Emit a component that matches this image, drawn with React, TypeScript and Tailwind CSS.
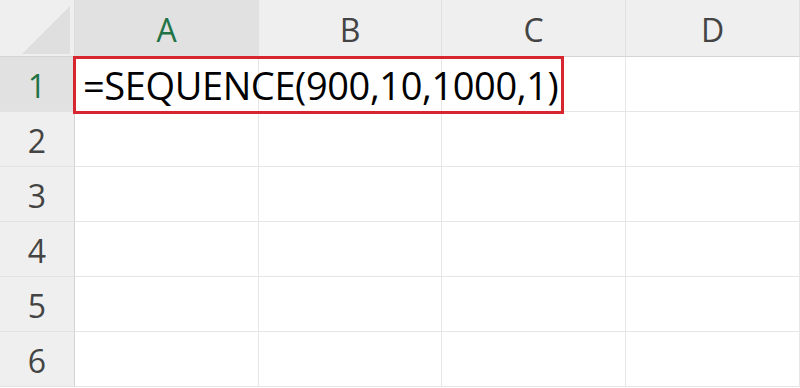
import React from 'react';

const cols = ['A', 'B', 'C', 'D'];
const rows = [1, 2, 3, 4, 5, 6];

export default function App() {
  return (
    <div className="w-[800px] h-[388px] overflow-hidden bg-white" style={{ fontFamily: '"Open Sans", "Noto Sans", sans-serif' }}>
      <div className="relative grid grid-cols-[75px_184px_183px_184px_1fr] grid-rows-[57px_repeat(6,55px)]">
        {/* corner */}
        <div className="bg-[#efefef] border-b border-[#d4d4d4] border-r border-r-[#dcdcdc] flex items-end justify-end">
          <svg width="50" height="48" viewBox="0 0 50 48" className="mb-[2px] mr-[2px]">
            <polygon points="0,48 48,48 48,0" fill="#dfdfdf" />
          </svg>
        </div>
        {cols.map((c) => (
          <div
            key={c}
            className={`flex items-center justify-center pt-[3px] text-[32px] border-b border-[#d4d4d4] border-r border-r-[#e0e0e0] ${c === 'A' ? 'bg-[#e1e1e1] text-[#217346]' : 'bg-[#efefef] text-[#444444]'}`}
          >
            {c}
          </div>
        ))}
        {rows.map((r) => (
          <React.Fragment key={r}>
            <div
              className={`flex items-center justify-center pt-[3px] text-[32px] border-r border-[#d4d4d4] border-b border-b-[#e2e2e2] ${r === 1 ? 'bg-[#e1e1e1] text-[#217346]' : 'bg-[#efefef] text-[#444444]'}`}
            >
              {r}
            </div>
            {cols.map((c) => (
              <div key={c} className="border-r border-b border-[#e6e6e6]" />
            ))}
          </React.Fragment>
        ))}
        {/* selected cell with formula */}
        <div className="absolute left-[73px] top-[56px] w-[491px] h-[58px] border-[3px] border-[#d7262f] flex items-center pl-[7px]">
          <span className="text-[38px] text-black leading-none whitespace-nowrap tracking-[-0.4px]">=SEQUENCE(900,10,1000,1)</span>
        </div>
      </div>
    </div>
  );
}
